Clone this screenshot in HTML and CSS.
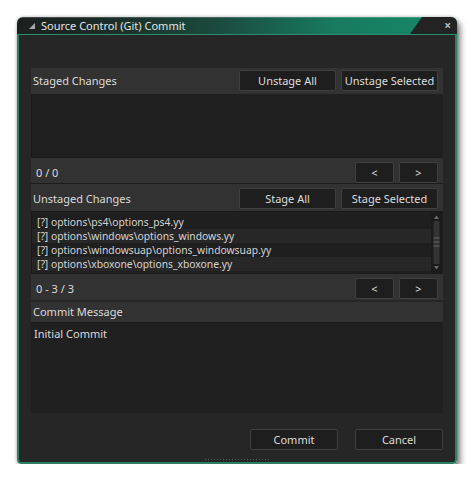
FILE: index.html
```html
<!DOCTYPE html>
<html>
<head>
<meta charset="utf-8">
<link rel="stylesheet" href="styles.css">
</head>
<body>
<div class="window">
  <div class="titlebar">
    <svg class="tri" width="6" height="6" viewBox="0 0 6 6"><polygon points="6,0 6,6 0,6" fill="#a8a8a8"/></svg>
    <span class="title">Source Control (Git) Commit</span>
    <div class="notch"><span class="close">×</span></div>
  </div>
  <div class="body">
    <div class="panel">
      <div class="bar head">
        <span class="label">Staged Changes</span>
        <div class="btns"><button class="btn wide">Unstage All</button><button class="btn wide">Unstage Selected</button></div>
      </div>
      <div class="list empty"></div>
      <div class="bar pager">
        <span class="count">0 / 0</span>
        <div class="btns"><button class="btn nav">&lt;</button><button class="btn nav">&gt;</button></div>
      </div>
      <div class="bar head head2">
        <span class="label">Unstaged Changes</span>
        <div class="btns"><button class="btn wide">Stage All</button><button class="btn wide">Stage Selected</button></div>
      </div>
      <div class="list files">
        <ul class="rows">
          <li class="row">[?] options\ps4\options_ps4.yy</li>
          <li class="row">[?] options\windows\options_windows.yy</li>
          <li class="row">[?] options\windowsuap\options_windowsuap.yy</li>
          <li class="row">[?] options\xboxone\options_xboxone.yy</li>
        </ul>
        <svg class="scroll" width="11" height="61" viewBox="0 0 11 61">
          <rect x="0" y="0" width="11" height="61" fill="#1b1b1b"/>
          <polygon points="3,7 5.5,3.5 8,7" fill="#6a6a6a"/>
          <rect x="2.5" y="9" width="6" height="43" rx="1" fill="#343434"/>
          <rect x="2.5" y="25" width="6" height="2" fill="#4c4c4c"/>
          <rect x="2.5" y="29" width="6" height="2" fill="#4c4c4c"/>
          <rect x="2.5" y="33" width="6" height="2" fill="#4c4c4c"/>
          <polygon points="3,54 5.5,57.5 8,54" fill="#6a6a6a"/>
        </svg>
      </div>
      <div class="bar pager pager2">
        <span class="count">0 - 3 / 3</span>
        <div class="btns"><button class="btn nav">&lt;</button><button class="btn nav">&gt;</button></div>
      </div>
    </div>
    <div class="commit-head">Commit Message</div>
    <div class="message">Initial Commit</div>
    <div class="footer"><button class="btn big">Commit</button><button class="btn big">Cancel</button></div>
    <div class="grip"></div>
  </div>
</div>
</body>
</html>
```
FILE: styles.css
```css
html, body {
  margin: 0;
  padding: 0;
  background: #ffffff;
}
body {
  font-family: "Noto Sans", "Open Sans", sans-serif;
  font-size: 11px;
  color: #dadada;
}
.window {
  margin: 17px 0 0 17px;
  width: 440px;
  height: 447px;
  border-radius: 6px 6px 4px 4px;
  overflow: hidden;
  box-shadow: 3px 4px 6px rgba(0,0,0,0.55), 0 0 3px rgba(0,0,0,0.25);
  display: flex;
  flex-direction: column;
}
.titlebar {
  height: 17px;
  border-bottom: 1px solid #2c8c6e;
  background: linear-gradient(90deg, #1c201f 0%, #1c2a26 18%, #1b4a3d 45%, #187a5e 72%, #168a6a 100%);
  display: flex;
  align-items: center;
  padding-left: 12px;
  box-shadow: inset 0 1px 0 rgba(255,255,255,0.18);
}
.tri {
  flex: none;
  margin-top: 1px;
}
.title {
  margin-left: 6px;
  color: #e4e4e4;
  font-size: 11px;
  flex: 1;
  line-height: 17px;
}
.notch {
  align-self: stretch;
  width: 47px;
  background: #232323;
  clip-path: polygon(12px 0, 100% 0, 100% 100%, 0 100%);
  display: flex;
  align-items: center;
  justify-content: flex-end;
  padding-right: 6px;
  box-sizing: border-box;
}
.close {
  color: #b8b8b8;
  font-size: 12px;
  font-weight: bold;
  line-height: 12px;
}
.body {
  flex: 1;
  background: #262626;
  border: 2px solid #2c7f65;
  border-top: 0;
  border-radius: 0 0 4px 4px;
  padding: 33px 12px 0 12px;
  display: flex;
  flex-direction: column;
}
.panel {
  display: flex;
  flex-direction: column;
}
.bar {
  display: flex;
  justify-content: space-between;
  align-items: flex-start;
  background: #323232;
  box-sizing: border-box;
}
.head {
  height: 26px;
  padding-top: 2px;
}
.head .label {
  padding-left: 2px;
  line-height: 21px;
  color: #dadada;
}
.head2 {
  height: 28px;
  border-top: 1px solid #1c1c1c;
  padding-top: 4px;
}
.pager {
  height: 26px;
  padding-top: 4px;
  border-top: 1px solid #1c1c1c;
}
.pager2 {
  height: 27px;
  padding-top: 4px;
}
.count {
  padding-left: 5px;
  line-height: 21px;
  color: #dadada;
}
.btns {
  display: flex;
  gap: 5px;
  padding-right: 5px;
}
.btn {
  height: 21px;
  padding: 0;
  margin: 0;
  background: #1e1e1e;
  border: 1px solid #404040;
  border-radius: 2px;
  color: #dcdcdc;
  font-family: "Noto Sans", "Open Sans", sans-serif;
  font-size: 11px;
  box-sizing: border-box;
}
.wide { width: 97px; }
.nav { width: 39px; }
.big { width: 88px; }
.list {
  background: #202020;
  box-sizing: border-box;
  border-left: 1px solid #1a1a1a;
}
.empty {
  height: 63px;
}
.files {
  height: 62px;
  display: flex;
  border-top: 1px solid #1a1a1a;
}
.rows {
  list-style: none;
  margin: 0;
  padding: 3px 0 0 0;
  flex: 1;
}
.row {
  height: 14px;
  line-height: 14px;
  font-size: 10.3px;
  padding-left: 5px;
  color: #d4d4d4;
  white-space: nowrap;
}
.row:nth-child(odd) { background: #1f1f1f; }
.row:nth-child(even) { background: #272727; }
.scroll {
  flex: none;
  margin-right: 1px;
}
.commit-head {
  margin-top: 2px;
  height: 20px;
  line-height: 20px;
  background: #323232;
  padding-left: 2px;
  color: #dadada;
  border-bottom: 1px solid #1c1c1c;
}
.message {
  height: 90px;
  background: #202020;
  box-sizing: border-box;
  padding: 3px 0 0 3px;
  line-height: 16px;
  color: #dadada;
}
.footer {
  display: flex;
  justify-content: flex-end;
  gap: 17px;
  padding-top: 16px;
}
.grip {
  align-self: center;
  margin-top: 8px;
  width: 67px;
  height: 3px;
  background: radial-gradient(circle, #5a5a5a 0.8px, transparent 1px) 0 0 / 3px 3px;
}
```
